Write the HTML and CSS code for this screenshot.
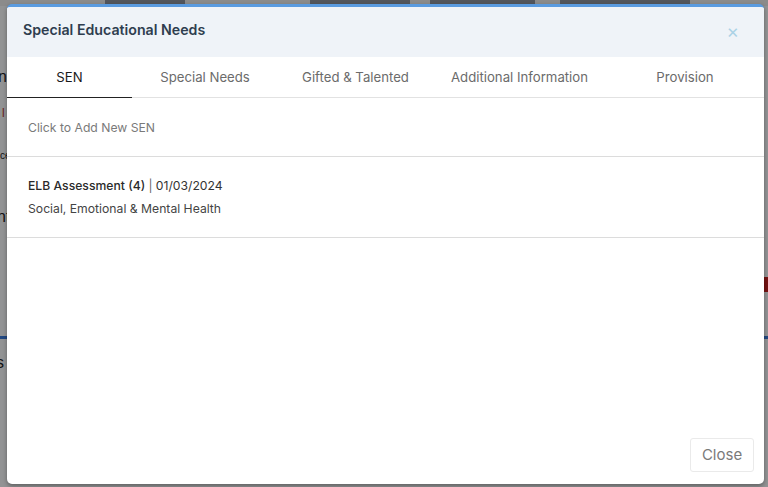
FILE: index.html
```html
<!DOCTYPE html>
<html lang="en">
<head>
<meta charset="utf-8">
<title>Special Educational Needs</title>
<link rel="stylesheet" href="styles.css">
</head>
<body>
<div class="page">
  <div class="topbar">
    <span class="tb tb1"></span><span class="tb tb2"></span><span class="tb tb3"></span><span class="tb tb4"></span>
  </div>
  <div class="page-body">
    <div class="side">
      <div class="frag f1">n</div>
      <div class="frag f2">l</div>
      <div class="frag f3">ce</div>
      <div class="frag f4">nt</div>
      <div class="blue-line"></div>
      <div class="frag f5">s</div>
    </div>
  </div>
  <div class="red-mark"></div>
  <div class="blue-mark"></div>
</div>
<div class="backdrop"></div>

<div class="modal">
  <div class="modal-header">
    <h1 class="modal-title">Special Educational Needs</h1>
    <span class="close-x">&#x2715;</span>
  </div>
  <div class="tabs">
    <div class="tab active">SEN</div>
    <div class="tab">Special Needs</div>
    <div class="tab">Gifted &amp; Talented</div>
    <div class="tab">Additional Information</div>
    <div class="tab">Provision</div>
  </div>
  <div class="modal-body">
    <div class="row add-row">Click to Add New SEN</div>
    <div class="row item-row">
      <div class="item-title">ELB Assessment (4) <span class="sep">|</span> <span class="date">01/03/2024</span></div>
      <div class="item-sub">Social, Emotional &amp; Mental Health</div>
    </div>
  </div>
  <div class="modal-footer">
    <button class="btn-close">Close</button>
  </div>
</div>
</body>
</html>
```

FILE: styles.css
```css
* { box-sizing: border-box; }
html, body { margin: 0; padding: 0; }
body {
  width: 768px;
  height: 487px;
  overflow: hidden;
  position: relative;
  font-family: Inter, "Noto Sans", "Liberation Sans", sans-serif;
  background: #f4f5f7;
}
.page {
  width: 768px;
  height: 487px;
  position: relative;
}
.topbar {
  height: 6px;
  display: flex;
  background: #e8e8e8;
}
.tb { display: block; height: 4px; background: #8a9099; }
.tb1 { margin-left: 105px; width: 80px; }
.tb2 { margin-left: 125px; width: 100px; }
.tb3 { margin-left: 20px; width: 105px; }
.tb4 { margin-left: 25px; width: 130px; }
.page-body { padding-top: 60px; }
.side { width: 10px; position: relative; height: 400px; font-family: "Liberation Sans", sans-serif; color: #222; }
.frag { position: absolute; left: 0; font-size: 16px; }
.f1 { top: 2px; left: -2px; }
.f2 { top: 40px; font-size: 12px; left: 2px; color: #a33; }
.f3 { top: 84px; font-size: 10px; left: 0; }
.f4 { top: 142px; font-size: 16px; left: -3px; }
.blue-line { position: absolute; top: 270px; left: 0; width: 10px; height: 3px; background: #3a78d8; }
.f5 { top: 288px; font-size: 16px; left: -4px; }
.red-mark { position: absolute; right: 0; top: 277px; width: 4px; height: 15px; background: #c21f1f; }
.blue-mark { position: absolute; right: 0; top: 336px; width: 4px; height: 3px; background: #3a78d8; }
.backdrop {
  position: absolute;
  inset: 0;
  background: rgba(0, 0, 0, 0.4);
}

.modal {
  position: absolute;
  left: 7px;
  top: 4px;
  width: 757px;
  height: 480px;
  background: #fff;
  border-top: 3px solid #5a9be0;
  border-radius: 5px;
  box-shadow: 0 2px 4px rgba(0,0,0,0.35);
  display: flex;
  flex-direction: column;
  overflow: hidden;
}
.modal-header {
  height: 50px;
  background: #eff3f8;
  display: flex;
  align-items: center;
  justify-content: space-between;
  padding: 0 25px 5px 16px;
}
.modal-title {
  margin: 0;
  font-size: 14.2px;
  font-weight: 600;
  color: #2e3d4f;
}
.close-x {
  font-size: 15px;
  color: #abd2e6;
  margin-top: 6px;
  font-family: "DejaVu Sans", sans-serif;
}
.tabs {
  display: grid;
  grid-template-columns: 125px 146px 155px 173px 1fr;
  height: 41px;
  border-bottom: 1px solid #e2e2e2;
}
.tab {
  display: flex;
  align-items: center;
  justify-content: center;
  font-size: 13.2px;
  color: #6b6b6b;
  border-bottom: 1px solid transparent;
  margin-bottom: -1px;
}
.tab.active {
  color: #1a1a1a;
  border-bottom: 1px solid #222;
}
.modal-body { flex: 1; }
.row {
  border-bottom: 1px solid #dcdcdc;
  padding: 0 21px;
}
.add-row {
  height: 59px;
  display: flex;
  align-items: center;
  font-size: 12.2px;
  color: #7a7a7a;
}
.item-row {
  height: 81px;
  padding-top: 20px;
}
.item-title {
  font-size: 12.2px;
  color: #2a2a2a;
  font-weight: 500;
  line-height: 17px;
}
.sep { color: #666; font-weight: 400; }
.item-title .date { font-weight: 400; color: #333; }
.item-sub {
  margin-top: 6px;
  font-size: 12.2px;
  color: #444;
  line-height: 17px;
}
.modal-footer {
  display: flex;
  justify-content: flex-end;
  padding: 0 10px 12px 0;
}
.btn-close {
  width: 64px;
  height: 34px;
  background: #fff;
  border: 1px solid #eaeaea;
  border-radius: 3px;
  font-family: Inter, "Noto Sans", "Liberation Sans", sans-serif;
  font-size: 15px;
  color: #7a7a7a;
  padding: 0 0 2px 0;
}
```
